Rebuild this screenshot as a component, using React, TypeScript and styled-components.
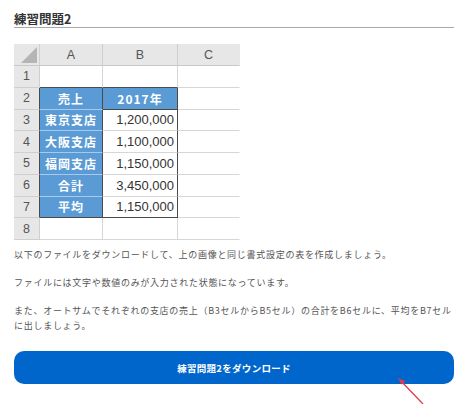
import React from 'react'
import styled, { createGlobalStyle } from 'styled-components'

const GlobalStyle = createGlobalStyle`
  html, body {
    margin: 0;
    padding: 0;
    background: #fff;
  }
  body {
    font-family: "Noto Sans CJK JP", "Noto Sans", sans-serif;
    color: #333;
  }
`

const Page = styled.div`
  position: relative;
  width: 474px;
  height: 404px;
  padding: 10px 20px 0 14px;
  box-sizing: border-box;
  overflow: hidden;
`

const Heading = styled.h2`
  margin: 0;
  font-size: 12.5px;
  font-weight: 700;
  line-height: 17px;
  color: #333;
  border-bottom: 1px solid #a8a8a8;
`

const Sheet = styled.div`
  margin-top: 16px;
  display: grid;
  grid-template-columns: 26px 63px 75px 62px;
  grid-template-rows: 22px repeat(8, 21.75px);
  width: 226px;
`

type Tone = 'head' | 'blue' | 'plain'

const Cell = styled.div<{ $tone: Tone; $right: string; $bottom: string; $align: 'left' | 'center' | 'right' }>`
  box-sizing: border-box;
  display: flex;
  align-items: center;
  justify-content: ${(p) => (p.$align === 'right' ? 'flex-end' : p.$align === 'left' ? 'flex-start' : 'center')};
  padding: 0 3px;
  background: ${(p) => (p.$tone === 'head' ? '#e7e7e7' : p.$tone === 'blue' ? '#5b9bd5' : '#fff')};
  color: ${(p) => (p.$tone === 'blue' ? '#fff' : p.$tone === 'head' ? '#555' : '#333')};
  border-right: 1px solid ${(p) => p.$right};
  border-bottom: 1px solid ${(p) => p.$bottom};
  font-family: ${(p) => (p.$tone === 'blue' ? '"Noto Sans CJK JP", sans-serif' : '"Liberation Sans", "Noto Sans CJK JP", sans-serif')};
  font-size: ${(p) => (p.$tone === 'blue' ? '12px' : p.$tone === 'head' ? '12.5px' : '13px')};
  font-weight: ${(p) => (p.$tone === 'blue' ? 700 : 400)};
  letter-spacing: ${(p) => (p.$tone === 'blue' ? '1px' : '0')};
  white-space: nowrap;
  overflow: hidden;
`

const Corner = styled.div`
  box-sizing: border-box;
  background: #e7e7e7;
  border-right: 1px solid #d0d0d0;
  border-bottom: 1px solid #c8c8c8;
  display: flex;
  align-items: flex-end;
  justify-content: flex-end;
  padding: 0 2px 2px 0;
`

const Text = styled.p`
  margin: 0 0 13px;
  font-size: 9px;
  letter-spacing: 0.72px;
  line-height: 15px;
  color: #555;
`

const Intro = styled(Text)`
  margin-top: 7px;
`

const DownloadButton = styled.button`
  display: block;
  width: 440px;
  height: 33px;
  margin-top: 18px;
  border: none;
  border-radius: 10px;
  background: #0066cc;
  color: #fff;
  font-family: "Noto Sans CJK JP", sans-serif;
  font-size: 9.5px;
  font-weight: 700;
  letter-spacing: 0.3px;
  cursor: pointer;
`

const Arrow = styled.svg`
  position: absolute;
  left: 392px;
  top: 372px;
  width: 40px;
  height: 36px;
  pointer-events: none;
`

const cols = ['A', 'B', 'C']
const rows: [string, string][] = [
  ['', ''],
  ['売上', '2017年'],
  ['東京支店', '1,200,000'],
  ['大阪支店', '1,100,000'],
  ['福岡支店', '1,150,000'],
  ['合計', '3,450,000'],
  ['平均', '1,150,000'],
  ['', ''],
]

const GRID = '#d6d6d6'
const DARK = '#4a4a4a'
const BLUE_LINE = '#a9c9ea'

function Spreadsheet() {
  const cells: React.ReactNode[] = []
  cells.push(
    <Corner key="corner">
      <svg width="16" height="16" viewBox="0 0 16 16">
        <polygon points="16,0 16,16 0,16" fill="#b5b5b5" />
      </svg>
    </Corner>
  )
  cols.forEach((c, i) =>
    cells.push(
      <Cell key={c} $tone="head" $align="center" $right={i === 2 ? '#e7e7e7' : '#cfcfcf'} $bottom="#c8c8c8">
        {c}
      </Cell>
    )
  )
  rows.forEach(([a, b], r) => {
    const n = r + 1
    const inTable = n >= 2 && n <= 7
    const aboveTable = n === 1
    cells.push(
      <Cell key={`n${n}`} $tone="head" $align="center" $right={inTable ? DARK : '#cfcfcf'} $bottom="#cfcfcf">
        {n}
      </Cell>
    )
    const headerRow = n === 2
    cells.push(
      <Cell
        key={`a${n}`}
        $tone={inTable ? 'blue' : 'plain'}
        $align="center"
        $right={inTable ? DARK : GRID}
        $bottom={aboveTable || n === 7 ? DARK : inTable ? BLUE_LINE : GRID}
      >
        {a}
      </Cell>
    )
    cells.push(
      <Cell
        key={`b${n}`}
        $tone={headerRow ? 'blue' : 'plain'}
        $align={headerRow ? 'center' : 'right'}
        $right={inTable ? DARK : GRID}
        $bottom={aboveTable || n === 7 || headerRow ? DARK : GRID}
      >
        {b}
      </Cell>
    )
    cells.push(<Cell key={`c${n}`} $tone="plain" $align="left" $right="#fff" $bottom={GRID} />)
  })
  return <Sheet>{cells}</Sheet>
}

export default function App() {
  return (
    <>
      <GlobalStyle />
      <Page>
        <Heading>練習問題2</Heading>
        <Spreadsheet />
        <Intro>以下のファイルをダウンロードして、上の画像と同じ書式設定の表を作成しましょう。</Intro>
        <Text>ファイルには文字や数値のみが入力された状態になっています。</Text>
        <Text>
          また、オートサムでそれぞれの支店の売上（B3セルからB5セル）の合計をB6セルに、平均をB7セルに出しましょう。
        </Text>
        <DownloadButton>練習問題2をダウンロード</DownloadButton>
        <Arrow viewBox="0 0 40 36">
          <line x1="31" y1="32" x2="8" y2="8" stroke="#e23a4a" strokeWidth="1.3" />
          <polygon points="6,6 13.5,9.2 9.6,12.6" fill="#e23a4a" />
        </Arrow>
      </Page>
    </>
  )
}
